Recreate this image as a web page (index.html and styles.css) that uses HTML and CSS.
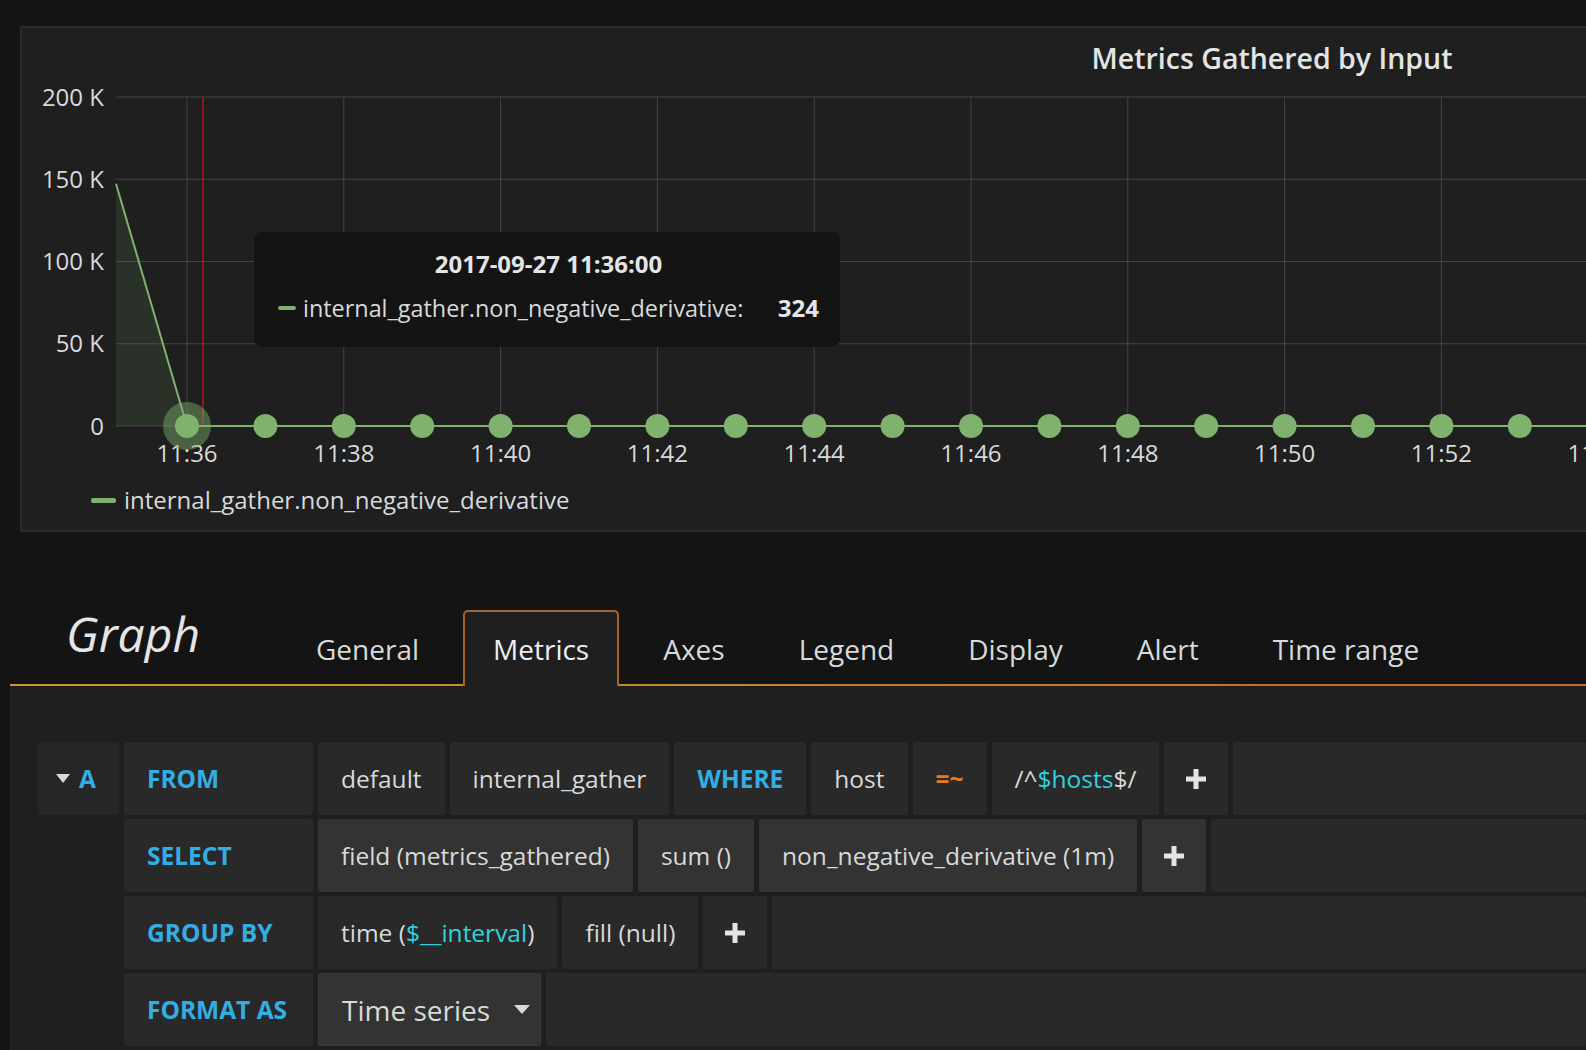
FILE: index.html
```html
<!DOCTYPE html>
<html lang="en">
<head>
<meta charset="utf-8">
<title>Graph - Metrics</title>
<link rel="stylesheet" href="styles.css">
</head>
<body>
<div class="page">
  <section class="panel">
    <div class="panel-title">Metrics Gathered by Input</div>
    <div class="graph">
      <svg class="graph-svg" width="1600" height="390" viewBox="0 0 1600 390" xmlns="http://www.w3.org/2000/svg">
        <g class="grid" stroke="#454545" stroke-width="1">
          <line x1="94" y1="9" x2="1600" y2="9"/>
          <line x1="94" y1="91.25" x2="1600" y2="91.25"/>
          <line x1="94" y1="173.5" x2="1600" y2="173.5"/>
          <line x1="94" y1="255.75" x2="1600" y2="255.75"/>
          <line x1="94" y1="338" x2="1600" y2="338"/>
          <line x1="165" y1="9" x2="165" y2="338"/>
          <line x1="321.8" y1="9" x2="321.8" y2="338"/>
          <line x1="478.6" y1="9" x2="478.6" y2="338"/>
          <line x1="635.4" y1="9" x2="635.4" y2="338"/>
          <line x1="792.2" y1="9" x2="792.2" y2="338"/>
          <line x1="949" y1="9" x2="949" y2="338"/>
          <line x1="1105.8" y1="9" x2="1105.8" y2="338"/>
          <line x1="1262.6" y1="9" x2="1262.6" y2="338"/>
          <line x1="1419.4" y1="9" x2="1419.4" y2="338"/>
          <line x1="1576.2" y1="9" x2="1576.2" y2="338"/>
        </g>
        <g class="axis-y" text-anchor="end">
          <text x="82" y="17.5">200 K</text>
          <text x="82" y="99.75">150 K</text>
          <text x="82" y="182">100 K</text>
          <text x="82" y="264.25">50 K</text>
          <text x="82" y="346.5">0</text>
        </g>
        <g class="axis-x" text-anchor="middle">
          <text x="165" y="373.5">11:36</text>
          <text x="321.8" y="373.5">11:38</text>
          <text x="478.6" y="373.5">11:40</text>
          <text x="635.4" y="373.5">11:42</text>
          <text x="792.2" y="373.5">11:44</text>
          <text x="949" y="373.5">11:46</text>
          <text x="1105.8" y="373.5">11:48</text>
          <text x="1262.6" y="373.5">11:50</text>
          <text x="1419.4" y="373.5">11:52</text>
          <text x="1576.2" y="373.5">11:54</text>
        </g>
        <polygon points="94,95.7 165,338 94,338" fill="#7eb26d" fill-opacity="0.12"/>
        <line x1="181" y1="9" x2="181" y2="338" stroke="#b3121c" stroke-width="1.5"/>
        <polyline points="94,95.7 165,338 1600,338" fill="none" stroke="#7eb26d" stroke-width="2"/>
        <circle cx="165" cy="338" r="24" fill="#7eb26d" fill-opacity="0.45"/>
        <g fill="#7eb26d">
          <circle cx="165" cy="338" r="12"/>
          <circle cx="243.4" cy="338" r="12"/>
          <circle cx="321.8" cy="338" r="12"/>
          <circle cx="400.2" cy="338" r="12"/>
          <circle cx="478.6" cy="338" r="12"/>
          <circle cx="557" cy="338" r="12"/>
          <circle cx="635.4" cy="338" r="12"/>
          <circle cx="713.8" cy="338" r="12"/>
          <circle cx="792.2" cy="338" r="12"/>
          <circle cx="870.6" cy="338" r="12"/>
          <circle cx="949" cy="338" r="12"/>
          <circle cx="1027.4" cy="338" r="12"/>
          <circle cx="1105.8" cy="338" r="12"/>
          <circle cx="1184.2" cy="338" r="12"/>
          <circle cx="1262.6" cy="338" r="12"/>
          <circle cx="1341" cy="338" r="12"/>
          <circle cx="1419.4" cy="338" r="12"/>
          <circle cx="1497.8" cy="338" r="12"/>
        </g>
      </svg>
      <div class="tooltip">
        <div class="tooltip-time">2017-09-27 11:36:00</div>
        <div class="tooltip-row">
          <span class="series-dash series-dash--small"></span>
          <span class="tooltip-name">internal_gather.non_negative_derivative:</span>
          <span class="tooltip-value">324</span>
        </div>
      </div>
    </div>
    <div class="legend">
      <span class="series-dash"></span>
      <span class="legend-name">internal_gather.non_negative_derivative</span>
    </div>
  </section>

  <section class="editor">
    <div class="editor-header">
      <div class="editor-title">Graph</div>
      <ul class="tabs">
        <li class="tab">General</li>
        <li class="tab tab--active">Metrics</li>
        <li class="tab">Axes</li>
        <li class="tab">Legend</li>
        <li class="tab">Display</li>
        <li class="tab">Alert</li>
        <li class="tab">Time range</li>
      </ul>
    </div>
    <div class="editor-body">
      <div class="query">
        <div class="row">
          <div class="seg seg--ref">
            <svg class="caret" width="14" height="9" viewBox="0 0 14 9"><polygon points="0,0 14,0 7,9" fill="#d8d9da"/></svg>
            <span class="keyword">A</span>
          </div>
          <div class="seg seg--label keyword">FROM</div>
          <div class="seg">default</div>
          <div class="seg">internal_gather</div>
          <div class="seg keyword">WHERE</div>
          <div class="seg">host</div>
          <div class="seg operator">=~</div>
          <div class="seg">/^<span class="variable">$hosts</span>$/</div>
          <div class="seg seg--plus"><svg width="20" height="20" viewBox="0 0 20 20"><rect x="7.5" y="0" width="5" height="20" fill="#e4e4e4"/><rect x="0" y="7.5" width="20" height="5" fill="#e4e4e4"/></svg></div>
          <div class="seg seg--grow"></div>
        </div>
        <div class="row row--indent">
          <div class="seg seg--label keyword">SELECT</div>
          <div class="seg seg--fn">field (metrics_gathered)</div>
          <div class="seg seg--fn">sum ()</div>
          <div class="seg seg--fn">non_negative_derivative (1m)</div>
          <div class="seg seg--fn seg--plus"><svg width="20" height="20" viewBox="0 0 20 20"><rect x="7.5" y="0" width="5" height="20" fill="#e4e4e4"/><rect x="0" y="7.5" width="20" height="5" fill="#e4e4e4"/></svg></div>
          <div class="seg seg--grow"></div>
        </div>
        <div class="row row--indent">
          <div class="seg seg--label keyword">GROUP BY</div>
          <div class="seg">time (<span class="variable">$__interval</span>)</div>
          <div class="seg">fill (null)</div>
          <div class="seg seg--plus"><svg width="20" height="20" viewBox="0 0 20 20"><rect x="7.5" y="0" width="5" height="20" fill="#e4e4e4"/><rect x="0" y="7.5" width="20" height="5" fill="#e4e4e4"/></svg></div>
          <div class="seg seg--grow"></div>
        </div>
        <div class="row row--indent">
          <div class="seg seg--label keyword">FORMAT AS</div>
          <div class="select">
            <span class="select-text">Time series</span>
            <svg class="select-caret" width="16" height="9" viewBox="0 0 16 9"><polygon points="0,0 16,0 8,9" fill="#d8d9da"/></svg>
          </div>
          <div class="seg seg--grow"></div>
        </div>
      </div>
    </div>
  </section>
</div>
</body>
</html>
```

FILE: styles.css
```css
html, body {
  margin: 0;
  padding: 0;
}

body {
  width: 1586px;
  height: 1050px;
  overflow: hidden;
  background: #141414;
  font-family: "Open Sans", "DejaVu Sans", sans-serif;
  color: #d8d9da;
}

.page {
  padding-top: 26px;
}

/* ---------- graph panel ---------- */
.panel {
  margin-left: 20px;
  width: 2500px;
  border: 2px solid #2a2a2b;
  background: #1f1f20;
}

.panel-title {
  height: 60px;
  line-height: 60px;
  text-align: center;
  font-size: 28.5px;
  font-weight: 600;
  color: #e3e4e5;
}

.graph {
  position: relative;
  height: 390px;
}

.graph-svg {
  display: block;
}

.graph-svg text {
  font-family: "Open Sans", "DejaVu Sans", sans-serif;
  font-size: 24px;
  fill: #d8d9da;
}

.tooltip {
  position: absolute;
  left: 232px;
  top: 144px;
  width: 586px;
  height: 115px;
  box-sizing: border-box;
  padding: 17px 21px 0 24px;
  background: #141414;
  border-radius: 8px;
  font-size: 24px;
  color: #d8d9da;
}

.tooltip-time {
  line-height: 30px;
  margin-bottom: 14px;
  text-align: center;
  font-weight: 700;
  color: #e4e5e6;
}

.tooltip-row {
  display: flex;
  align-items: center;
  line-height: 30px;
}

.tooltip-name {
  margin-left: 7px;
  font-size: 23.4px;
}

.tooltip-value {
  margin-left: auto;
  font-weight: 700;
  color: #e4e5e6;
}

.series-dash {
  display: inline-block;
  width: 25px;
  height: 5px;
  border-radius: 2px;
  background: #7eb26d;
}

.series-dash--small {
  width: 18px;
  height: 4px;
}

.legend {
  display: flex;
  align-items: center;
  height: 44px;
  line-height: 44px;
  padding: 0 0 8px 69px;
  font-size: 24px;
  color: #d8d9da;
}

.legend-name {
  margin-left: 8px;
}

/* ---------- editor ---------- */
.editor {
  margin-left: 10px;
}

.editor-header {
  display: flex;
  align-items: flex-end;
  height: 152px;
  border-bottom: 2px solid #c49a2a;
  border-image: linear-gradient(to right, #c59d2b 0%, #c7822b 45%, #c9652a 100%) 1;
}

.editor-title {
  width: 220px;
  padding-left: 56px;
  margin-bottom: 20px;
  line-height: 60px;
  font-size: 48px;
  font-style: italic;
  font-weight: 400;
  color: #e4e5e6;
}

.tabs {
  display: flex;
  gap: 14px;
  margin: 0;
  padding: 0;
  list-style: none;
}

.tab {
  position: relative;
  margin-bottom: -2px;
  padding: 18px 28px;
  border: 2px solid transparent;
  border-bottom-width: 0;
  line-height: 38px;
  font-size: 28px;
  color: #d8d9da;
}

.tab--active {
  background: #1f1f20;
  border-color: #a8622b;
  border-radius: 5px 5px 0 0;
  color: #eceef0;
}

.editor-body {
  background: #1f1f20;
  padding: 56px 0 0 28px;
  height: 400px;
}

.query {
  display: flex;
  flex-direction: column;
  gap: 4px;
}

.row {
  display: flex;
  gap: 5px;
  height: 73px;
}

.row--indent {
  padding-left: 86px;
}

.seg {
  display: flex;
  align-items: center;
  padding: 0 23px;
  background: #292929;
  border-radius: 2px;
  font-size: 24.5px;
  color: #d8d9da;
  white-space: nowrap;
}

.seg--ref {
  width: 81px;
  box-sizing: border-box;
  padding: 0 0 0 18px;
  background: #262626;
}

.caret {
  margin-right: 9px;
}

.seg--label {
  width: 189px;
  box-sizing: border-box;
}

.seg--fn {
  background: #333333;
}

.seg--plus {
  padding: 0 22px;
}

.seg--grow {
  flex: 1;
  padding: 0;
}

.keyword {
  color: #33aee5;
  font-weight: 700;
}

.operator {
  color: #eb7b18;
  font-weight: 700;
}

.variable {
  color: #32d1df;
}

.select {
  display: flex;
  align-items: center;
  padding: 0 10px 0 23px;
  background: #333333;
  border: 1px solid #393939;
  border-radius: 2px;
  font-size: 28px;
  color: #d8d9da;
}

.select-caret {
  margin-left: 24px;
}
```
